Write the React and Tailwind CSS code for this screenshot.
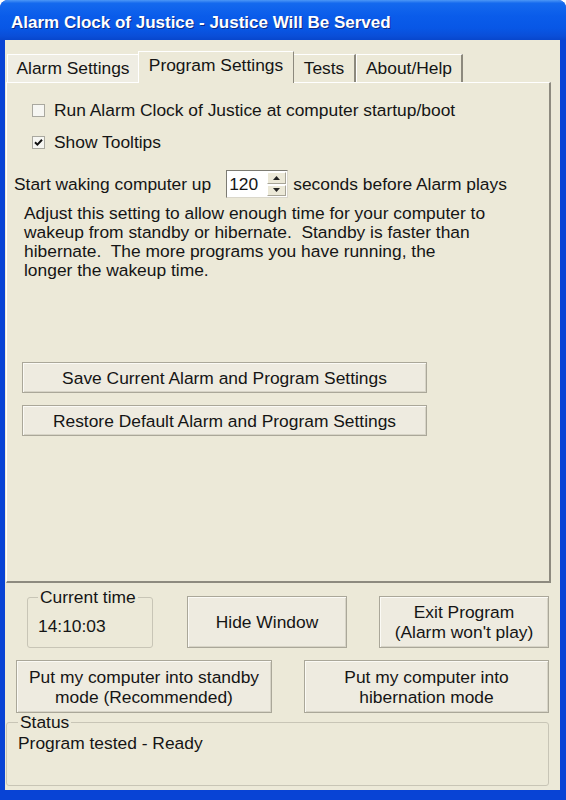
import React from 'react';

// Windows XP style "Alarm Clock of Justice" settings window

function CheckRow({ checked, label, className }) {
  return (
    <div className={`flex items-center h-[20px] pl-[25px] ${className}`}>
      <div className="w-[13px] h-[13px] border border-[#A9A89F] bg-[#F6F6F2] flex items-center justify-center">
        {checked && (
          <svg width="9" height="9" viewBox="0 0 9 9">
            <path d="M1 4.2 L3.4 6.6 L8 1.8" stroke="#111" strokeWidth="2" fill="none" />
          </svg>
        )}
      </div>
      <span className="ml-[9px]">{label}</span>
    </div>
  );
}

function XpButton({ className, children }) {
  return (
    <div
      className={`flex items-center justify-center text-center border border-[#AAA799] bg-[#EEEBE0] shadow-[inset_1px_1px_0_#FBFAF5,inset_-1px_-1px_0_#D7D4C7] leading-[20px] ${className}`}
    >
      {children}
    </div>
  );
}

function Spinner() {
  return (
    <div className="ml-[15px] flex h-[28px] w-[62px] border border-[#7C7B73] border-r-[#DAD7CB] border-b-[#DAD7CB] bg-white">
      <div className="flex-1 flex items-center pl-[2px]">120</div>
      <div className="w-[21px] flex flex-col gap-px p-px">
        <div className="flex-1 flex items-center justify-center bg-[#ECE9D8] border border-[#FFFFFF] border-r-[#A7A497] border-b-[#A7A497]">
          <svg width="7" height="4" viewBox="0 0 7 4">
            <path d="M0 4 L3.5 0 L7 4 Z" fill="#222" />
          </svg>
        </div>
        <div className="flex-1 flex items-center justify-center bg-[#ECE9D8] border border-[#FFFFFF] border-r-[#A7A497] border-b-[#A7A497]">
          <svg width="7" height="4" viewBox="0 0 7 4">
            <path d="M0 0 L3.5 4 L7 0 Z" fill="#222" />
          </svg>
        </div>
      </div>
    </div>
  );
}

export default function App() {
  return (
    <div className="w-[566px] h-[800px] bg-white font-['Liberation_Sans',Arial,sans-serif] text-[17.4px] text-[#151515]">
      <div className="w-full h-full rounded-t-[8px] bg-[#0843D5] flex flex-col overflow-hidden">
        {/* Title bar */}
        <div className="h-[40px] shrink-0 flex items-center pl-[11px] pt-[5px] bg-[linear-gradient(180deg,#4C97F6_0%,#1469EE_8%,#0A5CEA_40%,#0857E6_70%,#0A4ED8_90%,#0846CC_100%)]">
          <span className="text-white font-bold text-[17px] [text-shadow:1px_1px_0_#0B2A86]">
            Alarm Clock of Justice - Justice Will Be Served
          </span>
        </div>

        {/* Client area */}
        <div className="ml-[5px] mr-[6px] h-[750px] bg-[#ECE9D8] flex flex-col">
          {/* Tabs */}
          <div className="h-[42px] flex items-end pl-[2px]">
            <div className="w-[131px] h-[28px] flex items-center justify-center border-t border-l border-white bg-[#EFEDE3]">
              Alarm Settings
            </div>
            <div className="relative z-10 w-[156px] h-[32px] -mb-px pb-[4px] flex items-center justify-center bg-[#ECE9D8] border-t border-l border-white border-r border-r-[#8C897D]">
              Program Settings
            </div>
            <div className="w-[62px] h-[28px] flex items-center justify-center border-t border-white border-r-2 border-r-[#8C897D]">
              Tests
            </div>
            <div className="w-[107px] h-[28px] flex items-center justify-center border-t border-l border-white border-r-2 border-r-[#8C897D]">
              About/Help
            </div>
          </div>

          {/* Tab panel */}
          <div className="ml-px w-[545px] h-[501px] border-t border-l border-white border-r-2 border-b-2 border-r-[#8D8A7F] border-b-[#8D8A7F] flex flex-col">
            <CheckRow className="mt-[17px]" label="Run Alarm Clock of Justice at computer startup/boot" />
            <CheckRow className="mt-[12px]" checked label="Show Tooltips" />

            <div className="mt-[18px] ml-[7px] flex items-center h-[28px]">
              <span>Start waking computer up</span>
              <Spinner />
              <span className="ml-[5px]">seconds before Alarm plays</span>
            </div>

            <p className="mt-[6px] ml-[17px] leading-[19px] whitespace-nowrap">
              Adjust this setting to allow enough time for your computer to
              <br />
              wakeup from standby or hibernate.&nbsp; Standby is faster than
              <br />
              hibernate.&nbsp; The more programs you have running, the
              <br />
              longer the wakeup time.
            </p>

            <XpButton className="mt-[82px] ml-[15px] w-[405px] h-[31px]">
              Save Current Alarm and Program Settings
            </XpButton>
            <XpButton className="mt-[12px] ml-[15px] w-[405px] h-[31px]">
              Restore Default Alarm and Program Settings
            </XpButton>
          </div>

          {/* Bottom controls */}
          <div className="mt-[4px] flex items-start">
            <fieldset className="ml-[22px] w-[126px] h-[61px] border border-[#C8C5B6] rounded-[3px] pl-[10px]">
              <legend className="px-[2px] leading-[20px]">Current time</legend>
              <div className="mt-[9px] leading-[20px]">14:10:03</div>
            </fieldset>
            <XpButton className="mt-[9px] ml-[34px] w-[160px] h-[52px]">Hide Window</XpButton>
            <XpButton className="mt-[9px] ml-[32px] w-[170px] h-[52px]">
              Exit Program
              <br />
              (Alarm won't play)
            </XpButton>
          </div>

          <div className="mt-[12px] flex">
            <XpButton className="ml-[11px] w-[256px] h-[53px]">
              Put my computer into standby
              <br />
              mode (Recommended)
            </XpButton>
            <XpButton className="ml-[32px] w-[245px] h-[53px]">
              Put my computer into
              <br />
              hibernation mode
            </XpButton>
          </div>

          <fieldset className="ml-px w-[543px] h-[73px] border border-[#C8C5B6] rounded-[3px] pl-[11px]">
            <legend className="px-[2px] leading-[18px]">Status</legend>
            <div className="mt-[2px] leading-[20px]">Program tested - Ready</div>
          </fieldset>
        </div>
      </div>
    </div>
  );
}
